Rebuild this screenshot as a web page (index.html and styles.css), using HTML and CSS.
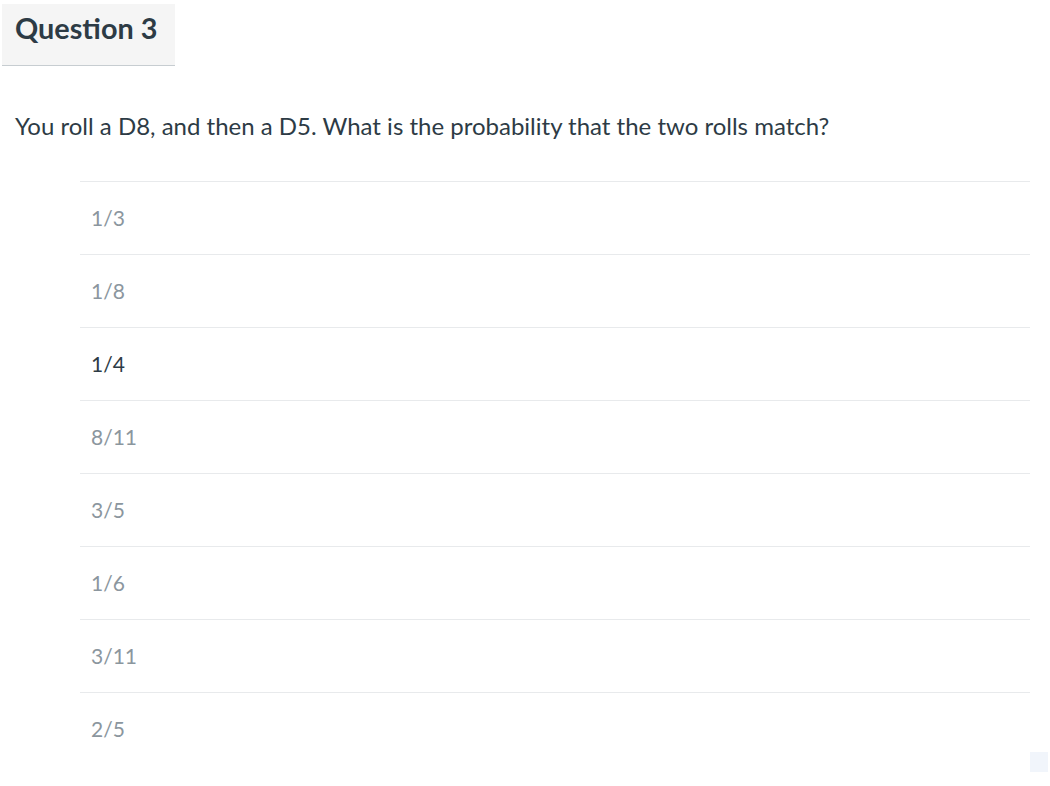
FILE: index.html
```html
<!DOCTYPE html>
<html>
<head>
<meta charset="utf-8">
<link rel="stylesheet" href="styles.css">
</head>
<body>
<div class="page">
  <div class="q-header"><h2 class="q-title">Question 3</h2></div>
  <p class="q-text">You roll a D8, and then a D5. What is the probability that the two rolls match?</p>
  <ul class="answers">
    <li class="answer">1/3</li>
    <li class="answer">1/8</li>
    <li class="answer selected">1/4</li>
    <li class="answer">8/11</li>
    <li class="answer">3/5</li>
    <li class="answer">1/6</li>
    <li class="answer">3/11</li>
    <li class="answer">2/5</li>
  </ul>
  <div class="corner"></div>
</div>
</body>
</html>
```
FILE: styles.css
```css
html, body {
  margin: 0;
  padding: 0;
  background: #ffffff;
}
body {
  font-family: Lato, "Liberation Sans", sans-serif;
  color: #2d3b45;
}
.page {
  position: relative;
  width: 1050px;
  height: 786px;
  overflow: hidden;
}
.q-header {
  display: inline-block;
  box-sizing: border-box;
  margin: 4px 0 0 2px;
  width: 173px;
  height: 62px;
  padding: 0 0 0 13px;
  background: #f5f5f5;
  border-bottom: 1px solid #c7cdd1;
}
.q-title {
  margin: 0;
  font-size: 28.8px;
  font-weight: 700;
  line-height: 48px;
  color: #2d3b45;
}
.q-text {
  margin: 45px 0 0 15px;
  font-size: 24px;
  line-height: 30px;
  color: #2d3b45;
}
.answers {
  list-style: none;
  margin: 40px 0 0 80px;
  padding: 0;
  width: 950px;
}
.answer {
  border-top: 1px solid #e8eaec;
  height: 72px;
  line-height: 72px;
  padding-left: 11px;
  font-size: 21px;
  color: #8b969e;
}
.answer.selected {
  color: #2d3b45;
}
.corner {
  position: absolute;
  left: 1030px;
  top: 752px;
  width: 18px;
  height: 20px;
  background: #f1f5fb;
}
```
